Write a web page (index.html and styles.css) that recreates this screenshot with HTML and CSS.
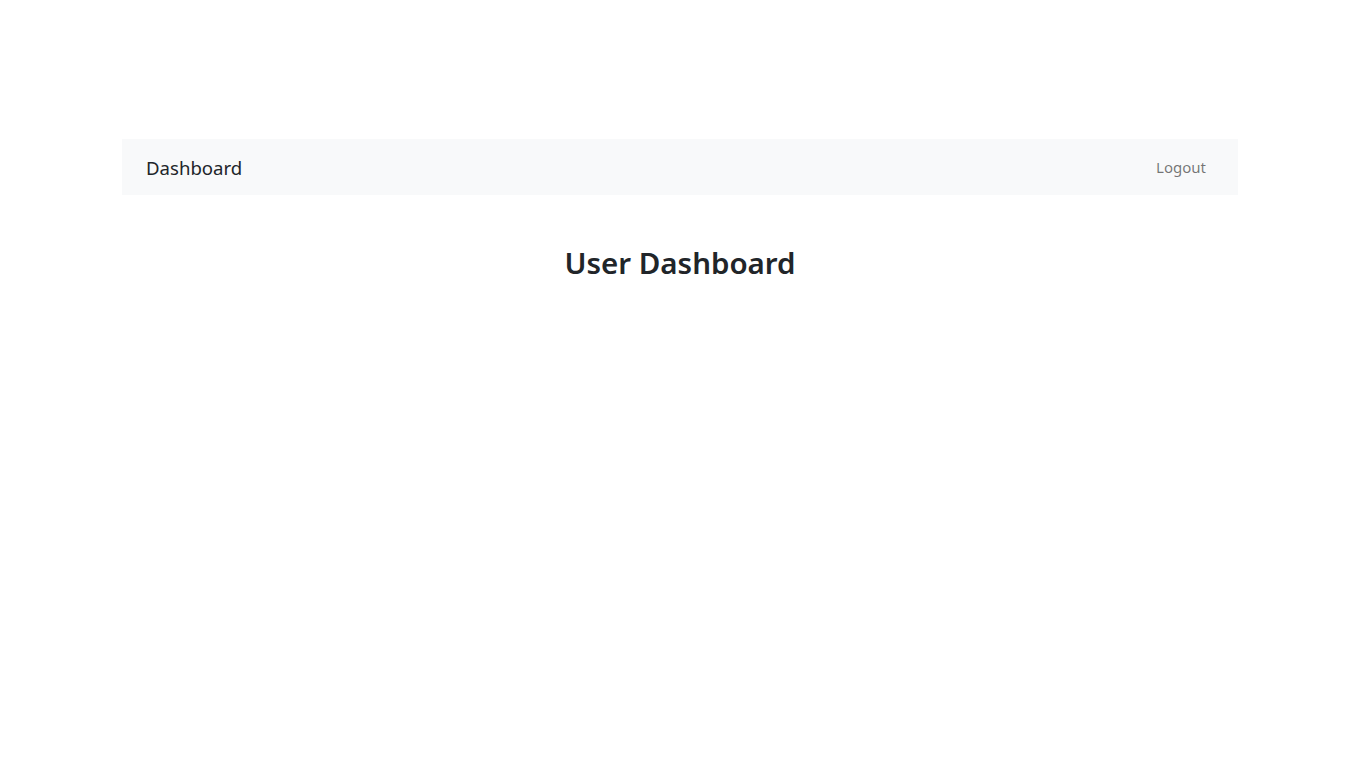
FILE: index.html
```html
<!DOCTYPE html>
<html lang="en">
<head>
    <meta charset="utf-8">
    <title>User Dashboard</title>
    <link rel="stylesheet" href="styles.css">
</head>
<body>
<div class="container">
    <nav class="navbar">
        <a class="navbar-brand" href="#">Dashboard</a>
        <ul class="navbar-nav">
            <li><a class="nav-link" href="#">Logout</a></li>
        </ul>
    </nav>
    <h2 class="page-title">User Dashboard</h2>
</div>
</body>
</html>
```

FILE: styles.css
```css
body {
    margin: 0;
    font-family: "Noto Sans", "Open Sans", sans-serif;
    font-size: 16px;
    color: #212529;
    background: #fff;
}

.container {
    max-width: 1116px;
    margin: 0 auto;
    padding: 139px 12px 0;
}

.navbar {
    display: flex;
    align-items: center;
    justify-content: space-between;
    height: 56px;
    padding: 0 24px;
    background: #f8f9fa;
}

.navbar-brand {
    padding-top: 1px;
    font-size: 18.6px;
    color: #212529;
    text-decoration: none;
}

.navbar-nav {
    list-style: none;
    margin: 0;
    padding: 0;
}

.nav-link {
    display: block;
    padding: 8px;
    font-size: 15px;
    color: rgba(0, 0, 0, 0.55);
    text-decoration: none;
}

.page-title {
    margin: 50px 0 0;
    text-align: center;
    font-size: 29.5px;
    font-weight: 600;
    line-height: 1.2;
}
```
